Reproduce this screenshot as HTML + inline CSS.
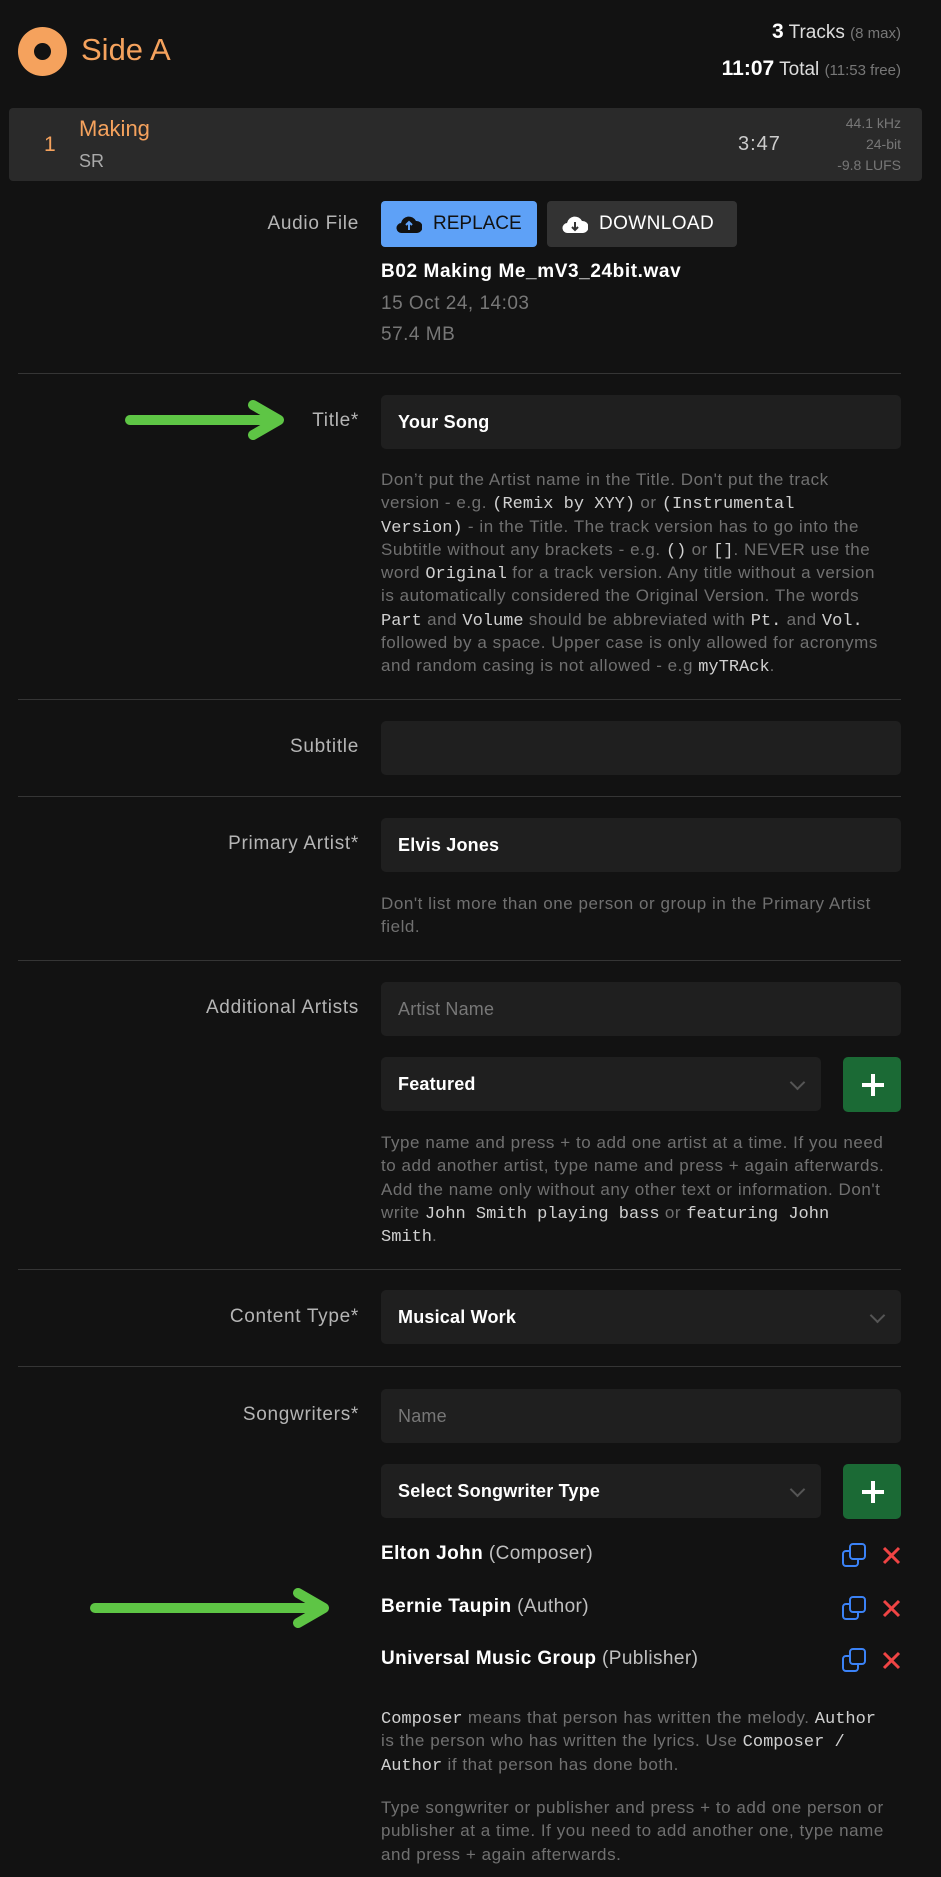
<!DOCTYPE html>
<html><head><meta charset="utf-8"><style>
*{margin:0;padding:0;box-sizing:border-box}
body{width:941px;height:1877px;background:#121212;font-family:"Liberation Sans",sans-serif;position:relative;overflow:hidden;color:#fff}
.a{position:absolute;white-space:nowrap}
.lbl{position:absolute;right:582px;font-size:19px;letter-spacing:0.7px;color:#b5b5b5}
.inp{position:absolute;left:381px;width:520px;height:54px;background:#1f1f1f;border-radius:5px;font-size:18px;letter-spacing:0.2px;font-weight:bold;color:#fff;padding:0 0 0 17px;line-height:54px}
.ph{font-weight:normal;color:#777}
.div{position:absolute;left:18px;width:883px;height:1px;background:#353535}
.help{position:absolute;left:381px;font-size:17px;letter-spacing:0.55px;line-height:23.3px;color:#707070;white-space:nowrap}
.help code{font-family:"Liberation Mono",monospace;color:#d0d0d0;font-size:17px;letter-spacing:0;line-height:1}
.chev{position:absolute;right:18px;top:20px;width:11px;height:11px;border-right:2px solid #555;border-bottom:2px solid #555;transform:rotate(45deg)}
.plus{position:absolute;left:843px;width:58px;height:55px;background:#1b6a35;border-radius:5px}
.plus:before{content:"";position:absolute;left:19px;top:26px;width:22px;height:4px;background:#fff}
.plus:after{content:"";position:absolute;left:28px;top:17px;width:4px;height:22px;background:#fff}
.sw{position:absolute;left:381px;font-size:19px;letter-spacing:0.4px;font-weight:bold;color:#fff}
.sw span{font-weight:normal;color:#c0c0c0}
</style></head><body>
<div class="a" style="left:18px;top:27px;width:49px;height:49px;border-radius:50%;background:#f5a25d"></div>
<div class="a" style="left:34px;top:43px;width:17px;height:17px;border-radius:50%;background:#121212"></div>
<div class="a" style="left:81px;top:32px;font-size:31px;color:#f5a25d">Side A</div>
<div class="a" style="right:40px;top:20px;font-size:19px;color:#ddd"><b style="font-size:21px;color:#fff">3</b> Tracks <span style="font-size:15px;color:#777">(8 max)</span></div>
<div class="a" style="right:40px;top:57px;font-size:19px;color:#ddd"><b style="font-size:21px;color:#fff">11:07</b> Total <span style="font-size:15px;color:#777">(11:53 free)</span></div>

<div class="a" style="left:9px;top:108px;width:913px;height:73px;background:#2a2a2a;border-radius:4px"></div>
<div class="a" style="left:44px;top:133px;font-size:21px;color:#f5a25d">1</div>
<div class="a" style="left:79px;top:116px;font-size:22px;color:#f5a25d">Making</div>
<div class="a" style="left:79px;top:151px;font-size:18px;color:#aaa">SR</div>
<div class="a" style="left:738px;top:133px;font-size:20px;color:#ccc;letter-spacing:1px">3:47</div>
<div class="a" style="right:40px;top:113px;font-size:14px;line-height:21px;color:#777;text-align:right">44.1 kHz<br>24-bit<br>-9.8 LUFS</div>

<div class="lbl" style="top:213px">Audio File</div>
<div class="a" style="left:381px;top:201px;width:156px;height:46px;background:#5ea1f7;border-radius:4px;color:#111;font-size:19px;line-height:46px;padding-left:52px">REPLACE</div>
<svg class="a" style="left:396px;top:213px" width="26" height="22" viewBox="0 0 26 22"><path d="M6 20a5 5 0 0 1-1-10 8 8 0 0 1 15-2 6 6 0 0 1 1 12z" fill="#111"/><path d="M13 17V9m-3 3l3-3 3 3" stroke="#5ea1f7" stroke-width="2" fill="none"/></svg>
<div class="a" style="left:547px;top:201px;width:190px;height:46px;background:#333;border-radius:4px;color:#fff;font-size:19px;letter-spacing:0.4px;line-height:46px;padding-left:52px">DOWNLOAD</div>
<svg class="a" style="left:562px;top:213px" width="26" height="22" viewBox="0 0 26 22"><path d="M6 20a5 5 0 0 1-1-10 8 8 0 0 1 15-2 6 6 0 0 1 1 12z" fill="#fff"/><path d="M13 9v8m-3-3l3 3 3-3" stroke="#333" stroke-width="2" fill="none"/></svg>
<div class="a" style="left:381px;top:261px;font-size:19px;letter-spacing:0.6px;font-weight:bold">B02 Making Me_mV3_24bit.wav</div>
<div class="a" style="left:381px;top:293px;font-size:19px;letter-spacing:0.5px;color:#777">15 Oct 24, 14:03</div>
<div class="a" style="left:381px;top:324px;font-size:19px;letter-spacing:0.5px;color:#777">57.4 MB</div>
<div class="div" style="top:373px"></div>

<svg class="a" style="left:120px;top:398px" width="170" height="46"><path d="M10 22H158M133 7l26 15-26 15" stroke="#5ec545" stroke-width="10" stroke-linecap="round" stroke-linejoin="round" fill="none"/></svg>
<div class="lbl" style="top:410px">Title*</div>
<div class="inp" style="top:395px">Your Song</div>
<div class="help" style="top:468px">Don’t put the Artist name in the Title. Don't put the track<br>version - e.g. <code>(Remix by XYY)</code> or <code>(Instrumental</code><br><code>Version)</code> - in the Title. The track version has to go into the<br>Subtitle without any brackets - e.g. <code>()</code> or <code>[]</code>. NEVER use the<br>word <code>Original</code> for a track version. Any title without a version<br>is automatically considered the Original Version. The words<br><code>Part</code> and <code>Volume</code> should be abbreviated with <code>Pt.</code> and <code>Vol.</code><br>followed by a space. Upper case is only allowed for acronyms<br>and random casing is not allowed - e.g <code>myTRAck</code>.</div>
<div class="div" style="top:699px"></div>

<div class="lbl" style="top:736px">Subtitle</div>
<div class="inp" style="top:721px"></div>
<div class="div" style="top:796px"></div>

<div class="lbl" style="top:833px">Primary Artist*</div>
<div class="inp" style="top:818px">Elvis Jones</div>
<div class="help" style="top:892px">Don't list more than one person or group in the Primary Artist<br>field.</div>
<div class="div" style="top:960px"></div>

<div class="lbl" style="top:997px">Additional Artists</div>
<div class="inp" style="top:982px"><span class="ph">Artist Name</span></div>
<div class="inp" style="top:1057px;width:440px">Featured<div class="chev"></div></div>
<div class="plus" style="top:1057px"></div>
<div class="help" style="top:1131px">Type name and press + to add one artist at a time. If you need<br>to add another artist, type name and press + again afterwards.<br>Add the name only without any other text or information. Don't<br>write <code>John Smith playing bass</code> or <code>featuring John</code><br><code>Smith</code>.</div>
<div class="div" style="top:1269px"></div>

<div class="lbl" style="top:1306px">Content Type*</div>
<div class="inp" style="top:1290px">Musical Work<div class="chev"></div></div>
<div class="div" style="top:1366px"></div>

<div class="lbl" style="top:1404px">Songwriters*</div>
<div class="inp" style="top:1389px"><span class="ph">Name</span></div>
<div class="inp" style="top:1464px;width:440px">Select Songwriter Type<div class="chev"></div></div>
<div class="plus" style="top:1464px"></div>

<svg class="a" style="left:85px;top:1586px" width="250" height="46"><path d="M10 22H238M213 7l26 15-26 15" stroke="#5ec545" stroke-width="10" stroke-linecap="round" stroke-linejoin="round" fill="none"/></svg>
<div class="sw" style="top:1543px">Elton John <span>(Composer)</span></div>
<div class="sw" style="top:1596px">Bernie Taupin <span>(Author)</span></div>
<div class="sw" style="top:1648px">Universal Music Group <span>(Publisher)</span></div>
<svg class="a" style="left:840px;top:1541px" width="62" height="28"><rect x="3" y="10" width="15" height="15" rx="3" fill="none" stroke="#3b82f6" stroke-width="2"/><rect x="10" y="3" width="15" height="15" rx="3" fill="#121212" stroke="#3b82f6" stroke-width="2"/><path d="M44 7l15 15M59 7L44 22" stroke="#ef4444" stroke-width="3"/></svg>
<svg class="a" style="left:840px;top:1594px" width="62" height="28"><rect x="3" y="10" width="15" height="15" rx="3" fill="none" stroke="#3b82f6" stroke-width="2"/><rect x="10" y="3" width="15" height="15" rx="3" fill="#121212" stroke="#3b82f6" stroke-width="2"/><path d="M44 7l15 15M59 7L44 22" stroke="#ef4444" stroke-width="3"/></svg>
<svg class="a" style="left:840px;top:1646px" width="62" height="28"><rect x="3" y="10" width="15" height="15" rx="3" fill="none" stroke="#3b82f6" stroke-width="2"/><rect x="10" y="3" width="15" height="15" rx="3" fill="#121212" stroke="#3b82f6" stroke-width="2"/><path d="M44 7l15 15M59 7L44 22" stroke="#ef4444" stroke-width="3"/></svg>

<div class="help" style="top:1706px"><code>Composer</code> means that person has written the melody. <code>Author</code><br>is the person who has written the lyrics. Use <code>Composer /</code><br><code>Author</code> if that person has done both.</div>
<div class="help" style="top:1796px">Type songwriter or publisher and press + to add one person or<br>publisher at a time. If you need to add another one, type name<br>and press + again afterwards.</div>
</body></html>
